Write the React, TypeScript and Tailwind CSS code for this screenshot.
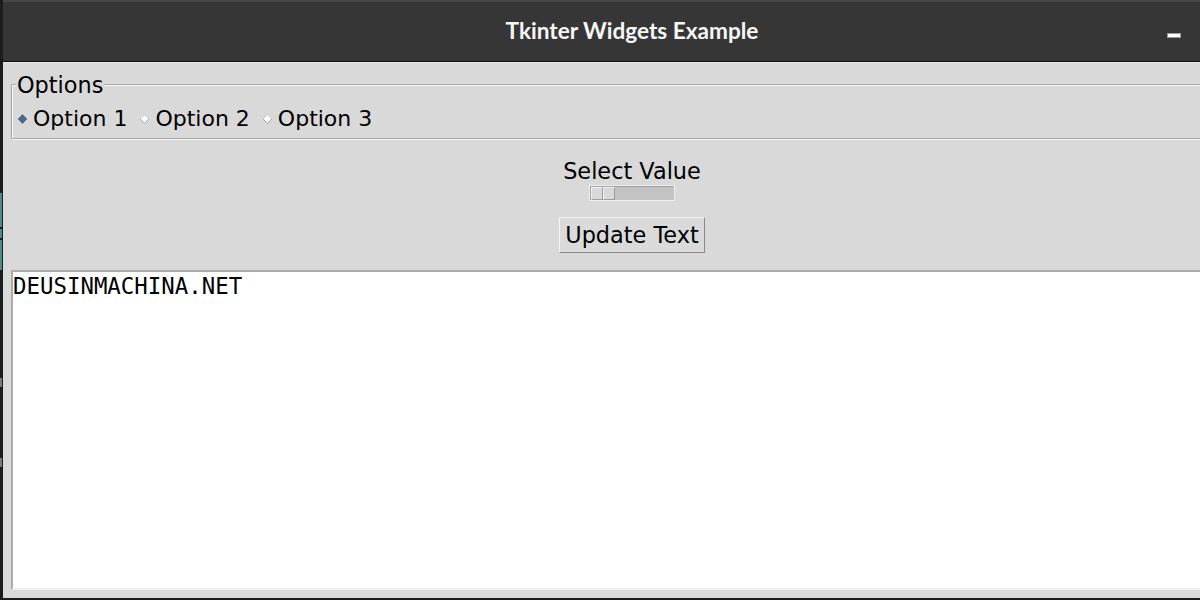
import React from "react";

function Diamond({ selected }: { selected: boolean }) {
  return (
    <svg width="9" height="10" viewBox="0 0 9 10" className="shrink-0">
      {selected ? (
        <polygon points="4.5,0.5 8.8,5 4.5,9.5 0.2,5" fill="#4a6a8c" stroke="#3a5670" strokeWidth="0.6" />
      ) : (
        <>
          <polygon points="4.5,0.5 8.8,5 4.5,9.5 0.2,5" fill="#ffffff" stroke="#bdbdbd" strokeWidth="0.7" />
          <polyline points="8.8,5 4.5,9.5 0.2,5" fill="none" stroke="#9f9f9f" strokeWidth="0.9" />
        </>
      )}
    </svg>
  );
}

function Radio({ label, selected }: { label: string; selected: boolean }) {
  return (
    <div className="flex items-center gap-[6px]">
      <Diamond selected={selected} />
      <span>{label}</span>
    </div>
  );
}

export default function App() {
  const body = { fontFamily: '"DejaVu Sans", "Liberation Sans", sans-serif' };
  return (
    <div className="w-[1200px] h-[600px] overflow-hidden flex bg-[#1c1c1c]">
      {/* left desktop strip */}
      <div className="w-[3px] shrink-0 flex flex-col">
        <div className="h-[193px]" />
        <div className="h-[34px] w-[2px] bg-[#4f8a8a]" />
        <div className="h-[2px]" />
        <div className="h-[9px] w-[2px] bg-[#4f8a8a]" />
        <div className="h-[2px]" />
        <div className="h-[30px] w-[2px] bg-[#4f8a8a]" />
        <div className="h-[108px]" />
        <div className="h-[9px] w-[2px] bg-[#7a7a7a]" />
        <div className="h-[71px]" />
        <div className="h-[9px] w-[2px] bg-[#7a7a7a]" />
      </div>

      {/* window */}
      <div className="w-[1258px] shrink-0 h-[598px] flex flex-col">
        {/* title bar */}
        <div className="h-[61px] shrink-0 bg-[#363636] border-t-2 border-[#474747] grid grid-cols-[1fr_auto_1fr]">
          <div />
          <div
            className="pt-[16px] text-[22.6px] leading-[26px] font-bold text-[#f7f7f7]"
            style={{ fontFamily: 'Lato, "Open Sans", sans-serif' }}
          >
            Tkinter Widgets Example
          </div>
          <div className="flex justify-end items-start pt-[31px] pr-[80px]">
            <div className="w-[14px] h-[5px] bg-white border border-[#9a9a9a]" />
          </div>
        </div>
        <div className="h-[1px] shrink-0 bg-[#0d0d0d]" />

        {/* body */}
        <div
          className="flex-1 flex flex-col bg-[#d9d9d9] border-t border-[#e8e8e8] px-[8px] pb-[8px] text-black text-[22.4px] leading-[26px]"
          style={body}
        >
          <fieldset className="mt-[9px] border border-[#a8a8a8] shadow-[inset_1px_1px_0_#f6f6f6,1px_1px_0_#f6f6f6] pl-[4px] pt-[9px] pb-[6px]">
            <legend className="px-[1px] h-[25px] leading-[26px] bg-[#d9d9d9]">Options</legend>
            <div className="flex items-center gap-[13px] pl-[2px] text-[22px]">
              <Radio label="Option 1" selected={true} />
              <Radio label="Option 2" selected={false} />
              <Radio label="Option 3" selected={false} />
            </div>
          </fieldset>

          <div className="mt-[19px] self-center h-[26px]">Select Value</div>

          <div className="mt-[1px] self-center w-[86px] h-[16px] border border-[#efefef] bg-[#c3c3c3]">
            <div className="w-full h-full border-t border-l border-[#a3a3a3] flex">
              <div className="w-[12px] h-full bg-[#d9d9d9] border-t border-l border-[#f2f2f2] border-r border-b border-r-[#9c9c9c] border-b-[#9c9c9c]" />
              <div className="w-[12px] h-full bg-[#d9d9d9] border-t border-l border-[#f2f2f2] border-r border-b border-r-[#9c9c9c] border-b-[#9c9c9c]" />
            </div>
          </div>

          <div className="mt-[16px] self-center border border-t-[#f4f4f4] border-l-[#f4f4f4] border-r-[#8a8a8a] border-b-[#8a8a8a] bg-[#dadada] px-[5px] py-[4px]">
            Update Text
          </div>

          <div
            className="mt-[17px] flex-1 bg-white border-2 border-t-[#acacac] border-l-[#acacac] border-r-[#efefef] border-b-[#efefef] pt-[1px] text-[22.4px]"
            style={{ fontFamily: '"DejaVu Sans Mono", "Liberation Mono", monospace' }}
          >
            DEUSINMACHINA.NET
          </div>
        </div>
      </div>
    </div>
  );
}
